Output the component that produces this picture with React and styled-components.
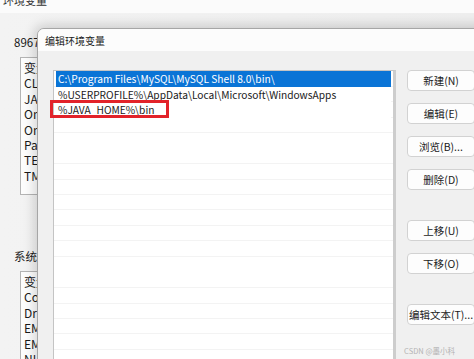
import styled, { createGlobalStyle } from "styled-components";

const GlobalStyle = createGlobalStyle`
  html, body {
    margin: 0;
    padding: 0;
    background: #f0f0f0;
  }
  body {
    font-family: "Noto Sans CJK SC", "Noto Sans", sans-serif;
  }
`;

const Screen = styled.div`
  position: relative;
  width: 474px;
  height: 359px;
  overflow: hidden;
  background: #f0f0f0;
`;

/* ---------- background window ---------- */

const BackWindow = styled.div`
  display: flex;
  flex-direction: column;
  height: 100%;
  overflow: hidden;
`;

const BackTitleBar = styled.div`
  flex-shrink: 0;
  height: 13px;
  background: #fbfbfb;
  overflow: hidden;
  padding-left: 3px;
`;

const BackTitle = styled.div`
  margin-top: -8px;
  font-size: 11px;
  line-height: 16px;
  color: #333;
`;

const BackBody = styled.div`
  display: flex;
  flex-direction: column;
  padding: 21px 0 0 14px;
  background: linear-gradient(90deg, #f3f3f3 0%, #eeeeee 100%);
  flex: 1;
  min-height: 0;
`;

const GroupLabel = styled.div`
  flex-shrink: 0;
  font-size: 11.5px;
  line-height: 16px;
  color: #1a1a1a;
  white-space: nowrap;
  margin-top: ${(p) => p.$top || 0}px;
`;

const BackList = styled.div`
  flex-shrink: 0;
  margin: 7px 0 0 6px;
  width: 420px;
  height: ${(p) => p.$height}px;
  background: #fdfdfd;
  border: 1px solid #b4b4b4;
  padding-top: 2px;
  box-sizing: border-box;
`;

const BackItem = styled.div`
  height: 15.4px;
  line-height: 15px;
  padding-left: 3px;
  font-size: 12px;
  color: #1a1a1a;
  white-space: nowrap;
`;

/* ---------- edit dialog ---------- */

const Dialog = styled.div`
  position: absolute;
  left: 37px;
  top: 28px;
  width: 470px;
  height: 360px;
  display: flex;
  flex-direction: column;
  background: #f0f0f0;
  border: 1px solid #a6a6a6;
  border-top-left-radius: 7px;
  box-shadow: 0 0 12px 3px rgba(0, 0, 0, 0.16);
  overflow: hidden;
`;

const DialogTitleBar = styled.div`
  flex-shrink: 0;
  height: 22px;
  background: #fcfcfc;
  display: flex;
  align-items: center;
  padding-left: 7px;
  font-size: 10px;
  color: #1a1a1a;
`;

const DialogBody = styled.div`
  display: flex;
  gap: 11px;
  padding: 19px 0 0 15px;
  flex: 1;
`;

const PathList = styled.div`
  position: relative;
  flex-shrink: 0;
  width: 343px;
  height: 300px;
  box-sizing: border-box;
  border: 1px solid #c4c4c4;
  border-right: 3px solid #cdcdcd;
  padding: 0 2px;
  background-color: #ffffff;
  background-image: repeating-linear-gradient(
    180deg,
    transparent 0px,
    transparent 14.5px,
    #f3f3f3 14.5px,
    #f3f3f3 15.5px
  );
`;

const PathRow = styled.div`
  position: relative;
  height: 15.5px;
  line-height: 15.5px;
  padding-left: 2px;
  font-size: 10.2px;
  white-space: nowrap;
  color: ${(p) => (p.$selected ? "#ffffff" : "#1a1a1a")};
  background: ${(p) => (p.$selected ? "#0a74d6" : "#ffffff")};

  ${(p) =>
    p.$marked &&
    `
    &::after {
      content: '';
      position: absolute;
      left: -6px;
      top: -2px;
      width: 113px;
      height: 12px;
      border: 3px solid #e2232a;
    }
  `}
`;

const ButtonColumn = styled.div`
  display: flex;
  flex-direction: column;
  gap: 30px;
`;

const ButtonGroup = styled.div`
  display: flex;
  flex-direction: column;
  gap: 12px;
`;

const DialogButton = styled.div`
  width: 68px;
  height: 21px;
  box-sizing: border-box;
  display: flex;
  align-items: center;
  justify-content: center;
  background: #fdfdfd;
  border: 1px solid #d2d2d2;
  border-radius: 4px;
  font-size: 10.5px;
  color: #1b1b1b;
  white-space: nowrap;
`;

const Watermark = styled.div`
  position: absolute;
  right: 19px;
  bottom: 3px;
  font-size: 7.5px;
  color: #b4b4b4;
`;

const userVars = ["变量", "CLASSPATH", "JAVA_HOME", "OneDrive", "OneDriveConsumer", "Path", "TEMP", "TMP"];
const systemVars = ["变量", "ComSpec", "DriverData", "EMSDK", "EMSDK_NODE", "NUMBER_OF_PROCESSORS"];

const paths = [
  "C:\\Program Files\\MySQL\\MySQL Shell 8.0\\bin\\",
  "%USERPROFILE%\\AppData\\Local\\Microsoft\\WindowsApps",
  "%JAVA_HOME%\\bin",
];

const buttonGroups = [
  ["新建(N)", "编辑(E)", "浏览(B)...", "删除(D)"],
  ["上移(U)", "下移(O)"],
  ["编辑文本(T)..."],
];

export default function App() {
  return (
    <Screen>
      <GlobalStyle />
      <BackWindow>
        <BackTitleBar>
          <BackTitle>环境变量</BackTitle>
        </BackTitleBar>
        <BackBody>
          <GroupLabel>8967 的用户变量(U)</GroupLabel>
          <BackList $height={138}>
            {userVars.map((v, i) => (
              <BackItem key={i}>{v}</BackItem>
            ))}
          </BackList>
          <GroupLabel $top={53}>系统变量(S)</GroupLabel>
          <BackList $height={120}>
            {systemVars.map((v, i) => (
              <BackItem key={i}>{v}</BackItem>
            ))}
          </BackList>
        </BackBody>
      </BackWindow>

      <Dialog>
        <DialogTitleBar>编辑环境变量</DialogTitleBar>
        <DialogBody>
          <PathList>
            {paths.map((p, i) => (
              <PathRow key={i} $selected={i === 0} $marked={i === 2}>
                {p}
              </PathRow>
            ))}
          </PathList>
          <ButtonColumn>
            {buttonGroups.map((group, gi) => (
              <ButtonGroup key={gi}>
                {group.map((label) => (
                  <DialogButton key={label}>{label}</DialogButton>
                ))}
              </ButtonGroup>
            ))}
          </ButtonColumn>
        </DialogBody>
      </Dialog>

      <Watermark>CSDN @墨小科</Watermark>
    </Screen>
  );
}
